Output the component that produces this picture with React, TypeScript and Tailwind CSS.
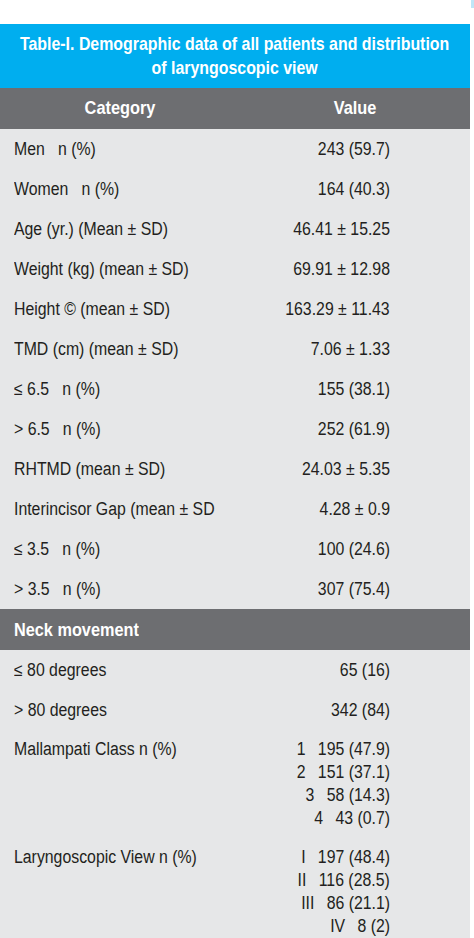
const rows: [string, string][] = [
  ["Men   n (%)", "243 (59.7)"],
  ["Women   n (%)", "164 (40.3)"],
  ["Age (yr.) (Mean ± SD)", "46.41 ± 15.25"],
  ["Weight (kg) (mean ± SD)", "69.91 ± 12.98"],
  ["Height © (mean ± SD)", "163.29 ± 11.43"],
  ["TMD (cm) (mean ± SD)", "7.06 ± 1.33"],
  ["≤ 6.5   n (%)", "155 (38.1)"],
  ["> 6.5   n (%)", "252 (61.9)"],
  ["RHTMD (mean ± SD)", "24.03 ± 5.35"],
  ["Interincisor Gap (mean ± SD", "4.28 ± 0.9"],
  ["≤ 3.5   n (%)", "100 (24.6)"],
  ["> 3.5   n (%)", "307 (75.4)"],
]

const neck: [string, string][] = [
  ["≤ 80 degrees", "65 (16)"],
  ["> 80 degrees", "342 (84)"],
]

const groups: { label: string; items: [string, string][] }[] = [
  {
    label: "Mallampati Class n (%)",
    items: [
      ["1", "195 (47.9)"],
      ["2", "151 (37.1)"],
      ["3", "58 (14.3)"],
      ["4", "43 (0.7)"],
    ],
  },
  {
    label: "Laryngoscopic View n (%)",
    items: [
      ["I", "197 (48.4)"],
      ["II", "116 (28.5)"],
      ["III", "86 (21.1)"],
      ["IV", "8 (2)"],
    ],
  },
]

// condensed look: the page font has no narrow face, so squeeze the glyphs
function Left({ children }: { children: React.ReactNode }) {
  return <span className="inline-block whitespace-pre scale-x-[0.88] origin-left">{children}</span>
}

function Right({ children }: { children: React.ReactNode }) {
  return <span className="inline-block whitespace-pre scale-x-[0.88] origin-right">{children}</span>
}

function Row({ label, value }: { label: string; value: string }) {
  return (
    <div className="grid grid-cols-[240px_1fr] h-10 items-center">
      <div className="pl-[14px]">
        <Left>{label}</Left>
      </div>
      <div className="pr-[80px] text-right">
        <Right>{value}</Right>
      </div>
    </div>
  )
}

export default function App() {
  return (
    <div
      className="w-[474px] h-[938px] bg-white overflow-hidden text-[#231f20] text-[18px]"
      style={{ fontFamily: '"Liberation Sans", Arial, sans-serif' }}
    >
      <div className="h-6 relative">
        <div className="absolute right-0 top-0 w-[3px] h-2 bg-[#bfe6f7]" />
      </div>
      <div className="w-[470px] bg-[#e6e7e8]">
        <div className="bg-[#00aeef] text-white font-bold leading-6 py-2 text-[18.5px] flex flex-col items-center">
          <span className="whitespace-nowrap scale-x-[0.86]">Table-I. Demographic data of all patients and distribution</span>
          <span className="whitespace-nowrap scale-x-[0.86]">of laryngoscopic view</span>
        </div>
        <div className="bg-[#6d6e71] text-white font-bold h-[41px] grid grid-cols-[240px_1fr] items-center text-[19px]">
          <span className="text-center scale-x-[0.86]">Category</span>
          <span className="text-center scale-x-[0.86]">Value</span>
        </div>
        {rows.map(([l, v]) => (
          <Row key={l} label={l} value={v} />
        ))}
        <div className="bg-[#6d6e71] text-white font-bold h-[41px] flex items-center pl-[14px] text-[18.5px]">
          <Left>Neck movement</Left>
        </div>
        {neck.map(([l, v]) => (
          <Row key={l} label={l} value={v} />
        ))}
        {groups.map((g) => (
          <div key={g.label} className="grid grid-cols-[240px_1fr] py-2 leading-[23px]">
            <div className="pl-[14px]">
              <Left>{g.label}</Left>
            </div>
            <div className="pr-[80px] flex flex-col items-end">
              {g.items.map(([k, v]) => (
                <Right key={k}>
                  {k}
                  <span className="ml-[14px]">{v}</span>
                </Right>
              ))}
            </div>
          </div>
        ))}
      </div>
    </div>
  )
}
